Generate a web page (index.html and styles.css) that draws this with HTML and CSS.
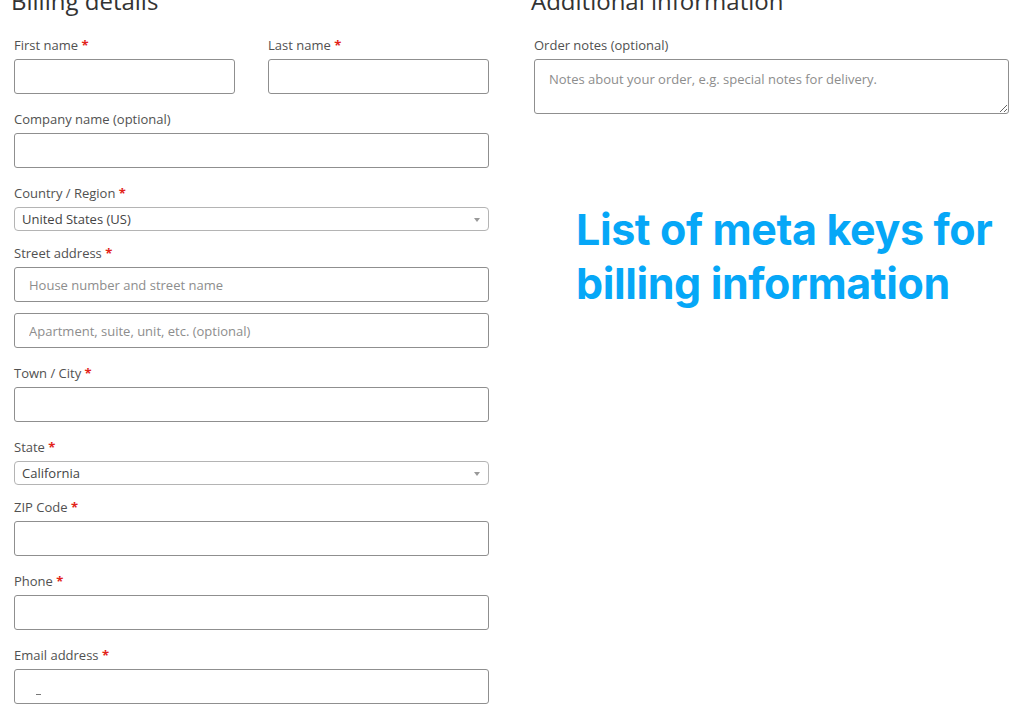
FILE: index.html
```html
<!DOCTYPE html>
<html lang="en">
  <head>
    <meta charset="UTF-8" />
    <meta name="viewport" content="width=device-width, initial-scale=1.0" />
    <title>Checkout</title>
    <link rel="stylesheet" href="styles.css">
  </head>
  <body>
    <div class="checkout">
      <div class="billing">
        <h3>Billing details</h3>
        <div class="row-split">
          <p class="field">
            <label>First name <abbr class="required">*</abbr></label>
            <input type="text" class="input-text" />
          </p>
          <p class="field">
            <label>Last name <abbr class="required">*</abbr></label>
            <input type="text" class="input-text" />
          </p>
        </div>
        <p class="field">
          <label>Company name (optional)</label>
          <input type="text" class="input-text" />
        </p>
        <p class="field field-select">
          <label>Country / Region <abbr class="required">*</abbr></label>
          <span class="select-box">United States (US)<span class="select-arrow"></span></span>
        </p>
        <p class="field">
          <label>Street address <abbr class="required">*</abbr></label>
          <input type="text" class="input-text" placeholder="House number and street name" />
          <input type="text" class="input-text second" placeholder="Apartment, suite, unit, etc. (optional)" />
        </p>
        <p class="field">
          <label>Town / City <abbr class="required">*</abbr></label>
          <input type="text" class="input-text" />
        </p>
        <p class="field field-select">
          <label>State <abbr class="required">*</abbr></label>
          <span class="select-box">California<span class="select-arrow"></span></span>
        </p>
        <p class="field">
          <label>ZIP Code <abbr class="required">*</abbr></label>
          <input type="text" class="input-text" />
        </p>
        <p class="field">
          <label>Phone <abbr class="required">*</abbr></label>
          <input type="tel" class="input-text" />
        </p>
        <p class="field">
          <label>Email address <abbr class="required">*</abbr></label>
          <span class="input-wrap">
            <input type="email" class="input-text" />
            <span class="caret-mark"></span>
          </span>
        </p>
      </div>
      <div class="additional">
        <h3>Additional information</h3>
        <p class="field">
          <label>Order notes (optional)</label>
          <textarea class="input-text notes" placeholder="Notes about your order, e.g. special notes for delivery."></textarea>
        </p>
        <div class="meta-title">List of meta keys for billing information</div>
      </div>
    </div>
  </body>
</html>
```

FILE: styles.css
```css
body {
  margin: 0;
  background: #fff;
  font-family: "Open Sans", sans-serif;
  color: #515151;
  overflow: hidden;
}
.checkout {
  display: grid;
  grid-template-columns: 475px 475px;
  column-gap: 45px;
  padding-left: 14px;
}
h3 {
  margin: -15px 0 19px -3px;
  font-size: 24px;
  line-height: 32px;
  font-weight: 400;
  color: #333;
}
.row-split {
  display: grid;
  grid-template-columns: 221px 221px;
  column-gap: 33px;
}
.field {
  margin: 0 0 16px;
}
.field label {
  display: block;
  font-size: 13px;
  line-height: 18px;
  margin-bottom: 5px;
}
.required {
  color: #e2231a;
  text-decoration: none;
  font-weight: 700;
}
.input-text {
  display: block;
  box-sizing: border-box;
  width: 100%;
  height: 35px;
  margin: 0;
  padding: 0 14px;
  border: 1px solid #8f8f8f;
  border-radius: 3px;
  font-family: "Open Sans", sans-serif;
  font-size: 13px;
  color: #444;
  background: #fff;
}
.input-text::placeholder {
  color: #8d8d8d;
}
.input-text.second {
  margin-top: 11px;
}
.field-select {
  margin-bottom: 13px;
}
.select-box {
  position: relative;
  display: block;
  box-sizing: border-box;
  height: 24px;
  margin-top: 2px;
  padding: 0 7px;
  border: 1px solid #b4b4b4;
  border-radius: 4px;
  font-size: 13px;
  line-height: 22px;
  color: #444;
}
.select-arrow {
  position: absolute;
  right: 8px;
  top: 10px;
  border-left: 3px solid transparent;
  border-right: 3px solid transparent;
  border-top: 4px solid #999;
}
.input-wrap {
  position: relative;
  display: block;
  margin-top: 2px;
}
.caret-mark {
  position: absolute;
  left: 22px;
  top: 25px;
  width: 5px;
  height: 1px;
  background: #777;
}
.notes {
  height: 55px;
  padding: 10px 14px;
  resize: vertical;
  line-height: 18px;
}
.meta-title {
  margin: 88px 0 0 42px;
  font-family: "Inter", sans-serif;
  font-weight: 700;
  font-size: 43px;
  line-height: 54px;
  color: #06a7f7;
  letter-spacing: -0.4px;
}
```
